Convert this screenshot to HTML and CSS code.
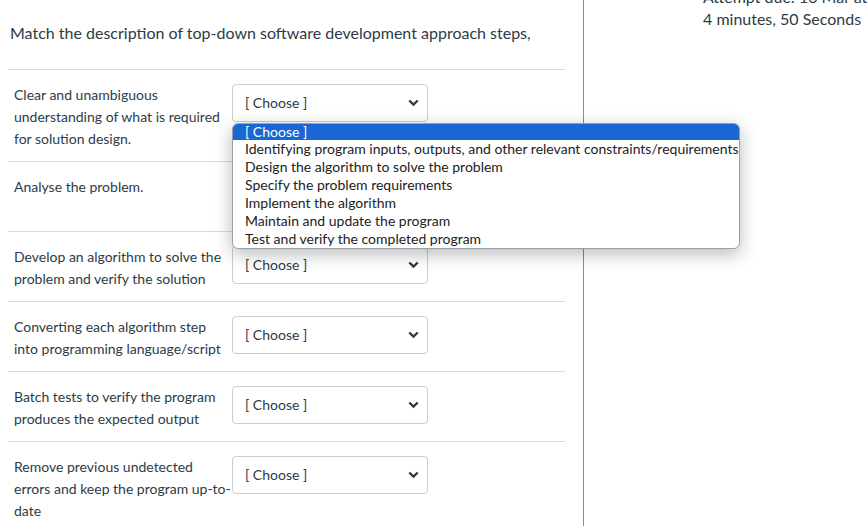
FILE: index.html
```html
<!DOCTYPE html>
<html>
<head>
<meta charset="utf-8">
<link rel="stylesheet" href="styles.css">
</head>
<body>
<div class="page">
  <main class="question">
    <div class="question-text">Match the description of top-down software development approach steps,</div>
    <div class="answers">
      <div class="row">
        <div class="label">Clear and unambiguous understanding of what is required for solution design.</div>
        <div class="select"><span>[ Choose ]</span><svg class="chev" width="11" height="8" viewBox="0 0 11 8"><path d="M1.3 1.5 L5.5 5.6 L9.7 1.5" fill="none" stroke="#2d3b45" stroke-width="2.4"/></svg></div>
        <div class="dropdown">
          <div class="opt sel">[ Choose ]</div>
          <div class="opt">Identifying program inputs, outputs, and other relevant constraints/requirements</div>
          <div class="opt">Design the algorithm to solve the problem</div>
          <div class="opt">Specify the problem requirements</div>
          <div class="opt">Implement the algorithm</div>
          <div class="opt">Maintain and update the program</div>
          <div class="opt">Test and verify the completed program</div>
        </div>
      </div>
      <div class="row">
        <div class="label">Analyse the problem.</div>
        <div class="select"><span>[ Choose ]</span><svg class="chev" width="11" height="8" viewBox="0 0 11 8"><path d="M1.3 1.5 L5.5 5.6 L9.7 1.5" fill="none" stroke="#2d3b45" stroke-width="2.4"/></svg></div>
      </div>
      <div class="row">
        <div class="label">Develop an algorithm to solve the problem and verify the solution</div>
        <div class="select"><span>[ Choose ]</span><svg class="chev" width="11" height="8" viewBox="0 0 11 8"><path d="M1.3 1.5 L5.5 5.6 L9.7 1.5" fill="none" stroke="#2d3b45" stroke-width="2.4"/></svg></div>
      </div>
      <div class="row">
        <div class="label">Converting each algorithm step into programming language/script</div>
        <div class="select"><span>[ Choose ]</span><svg class="chev" width="11" height="8" viewBox="0 0 11 8"><path d="M1.3 1.5 L5.5 5.6 L9.7 1.5" fill="none" stroke="#2d3b45" stroke-width="2.4"/></svg></div>
      </div>
      <div class="row">
        <div class="label">Batch tests to verify the program produces the expected output</div>
        <div class="select"><span>[ Choose ]</span><svg class="chev" width="11" height="8" viewBox="0 0 11 8"><path d="M1.3 1.5 L5.5 5.6 L9.7 1.5" fill="none" stroke="#2d3b45" stroke-width="2.4"/></svg></div>
      </div>
      <div class="row last">
        <div class="label">Remove previous undetected errors and keep the program up-to-date</div>
        <div class="select"><span>[ Choose ]</span><svg class="chev" width="11" height="8" viewBox="0 0 11 8"><path d="M1.3 1.5 L5.5 5.6 L9.7 1.5" fill="none" stroke="#2d3b45" stroke-width="2.4"/></svg></div>
      </div>
    </div>
  </main>
  <aside class="side">
    <div class="due">Attempt due: 16 Mar at 23:59</div>
    <div class="timer">4 minutes, 50 Seconds</div>
  </aside>
</div>
</body>
</html>
```
FILE: styles.css
```css
html, body {
  margin: 0;
  padding: 0;
  background: #fff;
  overflow: hidden;
}
body {
  font-family: Lato, "Open Sans", sans-serif;
  color: #2d3b45;
  width: 868px;
  height: 526px;
}
.page {
  display: flex;
  height: 526px;
}
.question {
  width: 583px;
  flex: 0 0 583px;
  border-right: 1px solid #8c8c8c;
  position: relative;
}
.question-text {
  margin: 0 18px 0 8px;
  padding: 23px 0 0 2px;
  height: 46px;
  font-size: 16px;
  line-height: 20px;
  border-bottom: 1px solid #d9dcde;
}
.answers {
  margin: 0 18px 0 8px;
  position: relative;
}
.row {
  display: flex;
  align-items: flex-start;
  padding: 14px 0 11px 6px;
  border-bottom: 1px solid #d9dcde;
}
.row.last {
  border-bottom: none;
}
.label {
  width: 218px;
  flex: 0 0 218px;
  font-size: 14px;
  line-height: 22px;
}
.select {
  box-sizing: border-box;
  width: 196px;
  height: 38px;
  margin: 0 0 6px 0;
  border: 1px solid #c7cdd1;
  border-radius: 4px;
  background: #fff;
  display: flex;
  align-items: center;
  justify-content: space-between;
  padding: 0 8px 0 12px;
  font-size: 14px;
}
.select span {
  position: relative;
  top: -1px;
}
.chev {
  display: block;
}
.dropdown {
  position: absolute;
  left: 224px;
  top: 53px;
  width: 508px;
  box-sizing: border-box;
  border: 1px solid #9aa0a6;
  border-radius: 6px;
  background: #fff;
  box-shadow: 0 5px 18px rgba(0, 0, 0, 0.28);
  overflow: hidden;
  z-index: 2;
}
.opt {
  font-size: 14px;
  line-height: 18px;
  height: 18px;
  padding-left: 12px;
  white-space: nowrap;
  color: #222;
}
.opt.sel {
  background: #1a66d2;
  color: #fff;
  height: 16px;
  line-height: 15px;
}
.side {
  flex: 1;
  padding-left: 119px;
  font-size: 16px;
  line-height: 22px;
  white-space: nowrap;
  overflow: hidden;
}
.due {
  margin-top: -14px;
}
.timer {
  color: #2d3b45;
}
```
